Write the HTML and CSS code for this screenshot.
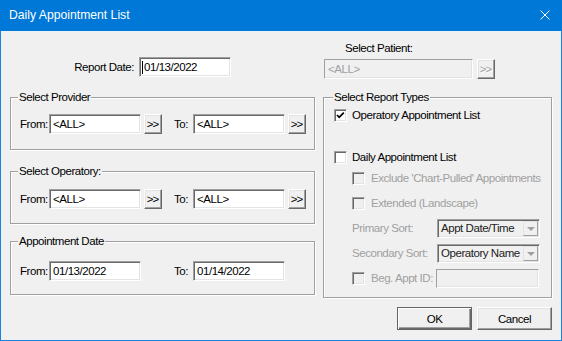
FILE: index.html
```html
<!DOCTYPE html>
<html lang="en">
<head>
    <meta charset="UTF-8">
    <title>Daily Appointment List</title>
    <link rel="stylesheet" href="styles.css">
</head>
<body>

<div class="window">
    <div class="titlebar">
        <span class="title">Daily Appointment List</span>
        <svg class="close" width="10" height="10" viewBox="0 0 10 10">
            <path d="M0.5 0.5 L9.5 9.5 M9.5 0.5 L0.5 9.5" stroke="#fff" stroke-width="1"/>
        </svg>
    </div>

    <div class="dialog">
        <div class="top-row">
            <div class="report-date">
                <span class="report-label">Report Date:</span>
                <div class="edit date-edit"><span class="caret"></span>01/13/2022</div>
            </div>
            <div class="patient">
                <div class="patient-caption">Select Patient:</div>
                <div class="patient-row">
                    <div class="edit edit-disabled patient-edit">&lt;ALL&gt;</div>
                    <div class="btn-more btn-disabled">&gt;&gt;</div>
                </div>
            </div>
        </div>

        <div class="columns">
            <div class="left-col">
                <div class="group group-provider">
                    <span class="legend">Select Provider</span>
                    <div class="range-row">
                        <span class="from-label">From:</span>
                        <div class="edit">&lt;ALL&gt;</div>
                        <div class="btn-more">&gt;&gt;</div>
                        <span class="to-label">To:</span>
                        <div class="edit">&lt;ALL&gt;</div>
                        <div class="btn-more">&gt;&gt;</div>
                    </div>
                </div>

                <div class="group group-operatory">
                    <span class="legend">Select Operatory:</span>
                    <div class="range-row">
                        <span class="from-label">From:</span>
                        <div class="edit">&lt;ALL&gt;</div>
                        <div class="btn-more">&gt;&gt;</div>
                        <span class="to-label">To:</span>
                        <div class="edit">&lt;ALL&gt;</div>
                        <div class="btn-more">&gt;&gt;</div>
                    </div>
                </div>

                <div class="group group-dates">
                    <span class="legend">Appointment Date</span>
                    <div class="range-row">
                        <span class="from-label">From:</span>
                        <div class="edit">01/13/2022</div>
                        <span class="to-label to-date">To:</span>
                        <div class="edit">01/14/2022</div>
                    </div>
                </div>
            </div>

            <div class="group report-types">
                <span class="legend">Select Report Types</span>
                <div class="check-row row-operatory">
                    <span class="checkbox">
                        <svg width="11" height="11" viewBox="0 0 11 11">
                            <polyline points="2,5 4.2,7.3 8.8,2.7" fill="none" stroke="#000" stroke-width="1.8"/>
                        </svg>
                    </span>
                    <span>Operatory Appointment List</span>
                </div>
                <div class="check-row row-daily">
                    <span class="checkbox"></span>
                    <span>Daily Appointment List</span>
                </div>
                <div class="check-row sub-row disabled">
                    <span class="checkbox checkbox-disabled"></span>
                    <span>Exclude 'Chart-Pulled' Appointments</span>
                </div>
                <div class="check-row sub-row disabled">
                    <span class="checkbox checkbox-disabled"></span>
                    <span>Extended (Landscape)</span>
                </div>
                <div class="check-row sub-row disabled">
                    <span class="sort-label">Primary Sort:</span>
                    <div class="combo">
                        <span class="combo-text">Appt Date/Time</span>
                        <span class="combo-arrow"></span>
                    </div>
                </div>
                <div class="check-row sub-row disabled">
                    <span class="sort-label">Secondary Sort:</span>
                    <div class="combo">
                        <span class="combo-text">Operatory Name</span>
                        <span class="combo-arrow"></span>
                    </div>
                </div>
                <div class="check-row sub-row disabled">
                    <span class="checkbox checkbox-disabled"></span>
                    <span class="appt-label">Beg. Appt ID:</span>
                    <div class="edit edit-disabled appt-edit"></div>
                </div>
            </div>
        </div>

        <div class="buttons">
            <div class="button button-default">OK</div>
            <div class="button">Cancel</div>
        </div>
    </div>
</div>

</body>
</html>
```

FILE: styles.css
```css
* {
    box-sizing: border-box;
    margin: 0;
    padding: 0;
}

body {
    font-family: 'Liberation Sans', Arial, sans-serif;
    font-size: 11.5px;
    letter-spacing: -0.45px;
    color: #000;
    background: #fff;
}

.window {
    width: 562px;
    height: 341px;
}

.titlebar {
    height: 31px;
    background-color: #0078d7;
    color: #fff;
    display: flex;
    align-items: center;
    justify-content: space-between;
    padding: 0 12px 1px 9px;
}

.title {
    font-size: 12.2px;
    letter-spacing: 0;
}

.dialog {
    height: 310px;
    background-color: #f0f0f0;
    border: 1px solid #1a82dc;
    border-top: none;
    padding: 0 9px;
}

/* top row: report date + patient */
.top-row {
    height: 66px;
    display: flex;
    align-items: flex-start;
}

.report-date {
    display: flex;
    align-items: center;
    margin-top: 26px;
    margin-left: 46px;
}

.report-label {
    width: 78px;
    text-align: right;
    margin-right: 5px;
}

.patient {
    margin-top: 10px;
    margin-left: 93px;
}

.patient-caption {
    line-height: 14px;
    padding-left: 21px;
    margin-bottom: 4px;
}

.patient-row {
    display: flex;
    gap: 4px;
}

/* sunken edit box */
.edit {
    width: 92px;
    height: 20px;
    background-color: #fff;
    border: 1px solid;
    border-color: #a0a0a0 #fff #fff #a0a0a0;
    box-shadow: inset 1px 1px 0 #696969, inset -1px -1px 0 #e3e3e3;
    padding-left: 3px;
    display: flex;
    align-items: center;
    white-space: nowrap;
}

.date-edit {
    padding-left: 2px;
}

.caret {
    width: 1px;
    height: 13px;
    background: #000;
    margin-right: 1px;
}

.edit-disabled {
    background-color: #f0f0f0;
    color: #a0a0a0;
    box-shadow: inset -1px -1px 0 #e3e3e3;
}

.patient-edit {
    width: 149px;
}

/* little ">>" button */
.btn-more {
    width: 18px;
    height: 20px;
    background-color: #f0f0f0;
    border: 1px solid;
    border-color: #fff #696969 #696969 #fff;
    box-shadow: inset -1px -1px 0 #a0a0a0, inset 1px 1px 0 #e3e3e3;
    display: flex;
    align-items: center;
    justify-content: center;
    letter-spacing: -1px;
    padding-right: 1px;
}

.btn-disabled {
    color: #a0a0a0;
    text-shadow: 1px 1px 0 #fff;
}

/* group boxes */
.columns {
    display: flex;
    gap: 8px;
}

.left-col {
    width: 305px;
}

.group {
    position: relative;
    border: 1px solid #a0a0a0;
    box-shadow: inset 1px 1px 0 #fff, 1px 1px 0 #fff;
}

.legend {
    position: absolute;
    top: -7px;
    left: 7px;
    line-height: 13px;
    padding: 0 1px;
    background-color: #f0f0f0;
}

.group-provider {
    padding: 16px 0 15px 9px;
}

.group-operatory {
    margin-top: 21px;
    padding: 17px 0 14px 9px;
}

.group-dates {
    margin-top: 17px;
    padding: 19px 0 13px 9px;
}

.range-row {
    display: flex;
    align-items: center;
}

.range-row .btn-more {
    margin-left: 3px;
}

.from-label {
    width: 29px;
}

.to-label {
    width: 19px;
    margin-left: 12px;
}

.to-date {
    margin-left: 33px;
}

/* report types */
.report-types {
    width: 229px;
    height: 201px;
    padding: 7px 0 0 10px;
}

.report-types .legend {
    left: 9px;
}

.check-row {
    height: 20px;
    display: flex;
    align-items: center;
    margin-bottom: 5px;
    white-space: nowrap;
}

.check-row .checkbox {
    margin-right: 5px;
}

.row-operatory {
    margin-bottom: 22px;
}

.row-daily {
    margin-bottom: 1px;
}

.sub-row {
    margin-left: 18px;
}

.sub-row .checkbox {
    margin-right: 6px;
}

.disabled {
    color: #a0a0a0;
}

.checkbox {
    width: 13px;
    height: 13px;
    background-color: #fff;
    border: 1px solid;
    border-color: #a0a0a0 #fff #fff #a0a0a0;
    box-shadow: inset 1px 1px 0 #696969, inset -1px -1px 0 #e3e3e3;
    display: flex;
    align-items: center;
    justify-content: center;
}

.checkbox-disabled {
    background-color: #f0f0f0;
}

.sort-label {
    width: 85px;
}

.combo {
    width: 103px;
    height: 19px;
    background-color: #f0f0f0;
    border: 1px solid;
    border-color: #a0a0a0 #fff #fff #a0a0a0;
    box-shadow: inset 1px 1px 0 #696969, inset -1px -1px 0 #e3e3e3;
    display: flex;
    align-items: center;
    padding: 1px 1px 1px 3px;
    color: #222;
}

.combo-text {
    flex: 1;
}

.combo-arrow {
    width: 15px;
    height: 15px;
    border: 1px solid;
    border-color: #e3e3e3 #a0a0a0 #a0a0a0 #e3e3e3;
    position: relative;
}

.combo-arrow::after {
    content: '';
    position: absolute;
    left: 3px;
    top: 5px;
    border-left: 4px solid transparent;
    border-right: 4px solid transparent;
    border-top: 4px solid #a0a0a0;
}

.appt-label {
    width: 65px;
}

.appt-edit {
    width: 103px;
    height: 19px;
}

/* dialog buttons */
.buttons {
    display: flex;
    justify-content: flex-end;
    gap: 5px;
    margin-top: 9px;
}

.button {
    width: 75px;
    height: 23px;
    background-color: #f0f0f0;
    border: 1px solid;
    border-color: #fff #696969 #696969 #fff;
    box-shadow: inset -1px -1px 0 #a0a0a0, inset 1px 1px 0 #e3e3e3;
    display: flex;
    align-items: center;
    justify-content: center;
}

.button-default {
    border-color: #646464;
    box-shadow: inset 1px 1px 0 #fff, inset -1px -1px 0 #696969, inset -2px -2px 0 #a0a0a0;
}
```
